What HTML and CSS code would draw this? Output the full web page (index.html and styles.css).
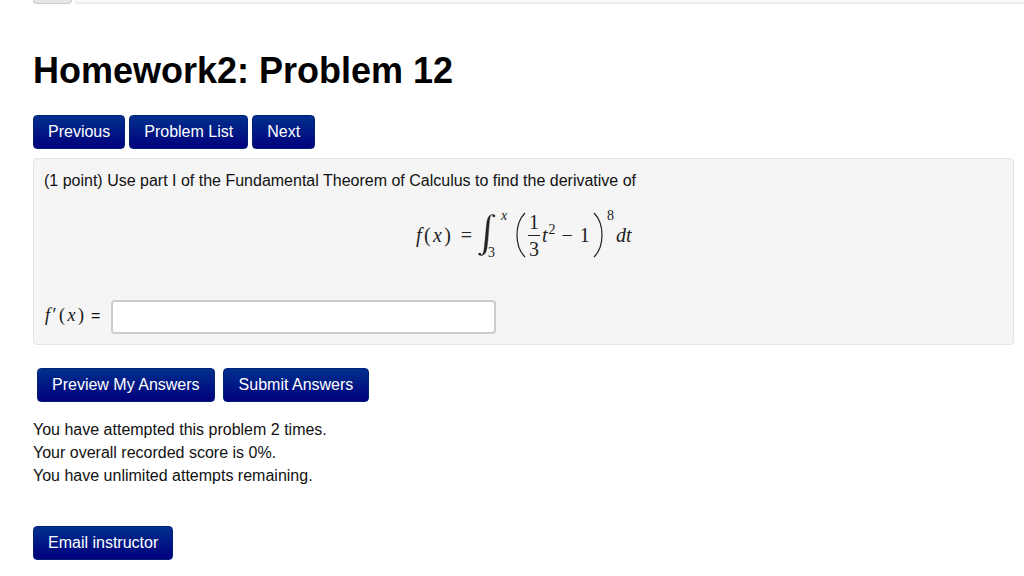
FILE: index.html
```html
<!DOCTYPE html>
<html lang="en">
<head>
<meta charset="utf-8">
<title>Homework2: Problem 12</title>
<link rel="stylesheet" href="styles.css">
</head>
<body>
<div class="topbar"><div class="tab"></div><div class="strip"></div></div>
<h1>Homework2: Problem 12</h1>
<nav class="nav">
  <a class="btn">Previous</a>
  <a class="btn">Problem List</a>
  <a class="btn">Next</a>
</nav>
<section class="well">
  <p class="statement">(1 point) Use part I of the Fundamental Theorem of Calculus to find the derivative of</p>
  <div class="display">
    <span class="m lhs"><i>f</i>(<i>x</i>) =</span>
    <svg class="integral" viewBox="4 0 13 44" preserveAspectRatio="none" aria-hidden="true"><path d="M14.800 1.500c-1.300 0-1.900 1.300-2.200 3.700-.7 5-1 19-2.100 29.500-.4 3.700-1.300 7.800-4.400 7.800-1.100 0-1.800-.6-1.800-1.400 0-.7.5-1 1-1 .6 0 .9.500.9.900 0 .3-.2.500-.3.600.1.100.3.100.4.100 1.200 0 1.700-2 2.100-6 .9-9.500 1.400-22.500 2.200-28.300.6-3.700 2-5.900 3.900-5.900 1.100 0 1.900.6 1.900 1.400 0 .7-.5 1-1 1-.6 0-.9-.5-.9-.9 0-.3.200-.5.300-.600-.1-.1-.3-.1-.4-.1z"/></svg>
    <span class="limits"><span class="upper"><i>x</i></span><span class="lower">3</span></span>
    <svg class="paren" viewBox="0 0 11 46" aria-hidden="true"><path d="M10 1C4.500 6.500 2 14 2 23s2.500 16.500 8 22" fill="none" stroke="currentColor" stroke-width="1.200"/></svg>
    <span class="frac"><span class="num">1</span><span class="den">3</span></span>
    <span class="m tail"><i>t</i><sup>2</sup><span class="minus">&minus;</span>1</span>
    <svg class="paren" viewBox="0 0 11 46" aria-hidden="true"><path d="M1 1c5.500 5.500 8 13 8 22s-2.500 16.500-8 22" fill="none" stroke="currentColor" stroke-width="1.200"/></svg>
    <span class="power">8</span>
    <span class="m dt"><i>dt</i></span>
  </div>
  <div class="answer">
    <label class="label"><span class="m prime"><i>f</i>&prime;(<i>x</i>)</span> =</label>
    <input class="field" type="text" aria-label="answer">
  </div>
</section>
<div class="actions">
  <a class="btn">Preview My Answers</a>
  <a class="btn submit">Submit Answers</a>
</div>
<div class="status">
  <p>You have attempted this problem 2 times.</p>
  <p>Your overall recorded score is 0%.</p>
  <p>You have unlimited attempts remaining.</p>
</div>
<a class="btn email">Email instructor</a>
</body>
</html>
```
FILE: styles.css
```css
* { box-sizing: border-box; }
html, body { height: 576px; overflow: hidden; }
body {
  margin: 0;
  padding: 0 10px 0 33px;
  background: #fff;
  color: #111;
  font-family: "Liberation Sans", Arial, sans-serif;
  font-size: 16px;
  line-height: 23px;
}
.topbar { display: flex; gap: 2px; height: 4px; }
.tab {
  width: 39px;
  background: #e6e6e6;
  border: 1px solid #ccc;
  border-top: 0;
  border-radius: 0 0 4px 4px;
}
.strip {
  flex: 1;
  margin-right: -10px;
  background: #fafafa;
  border-bottom: 2px solid #ececec;
  border-radius: 0 0 0 4px;
}
h1 {
  margin: 45px 0 0;
  color: #000;
  font-size: 36px;
  line-height: 44px;
  font-weight: 700;
}
.btn {
  display: inline-block;
  height: 34px;
  padding: 0 14px;
  border: 1px solid #00217a;
  border-radius: 4px;
  background: linear-gradient(#00308c, #00007d);
  color: #fff;
  line-height: 32px;
  white-space: nowrap;
}
.submit { padding: 0 15px; }
.nav { display: flex; gap: 4px; margin-top: 22px; }
.well {
  height: 187px;
  margin-top: 9px;
  padding: 10px;
  background: #f5f5f5;
  border: 1px solid #e3e3e3;
  border-radius: 4px;
}
.statement { margin: 0; }
.display {
  display: flex;
  align-items: center;
  justify-content: flex-start;
  height: 64px;
  margin-top: 11px;
  padding-left: 372px;
  color: #222;
  font-family: "Liberation Serif", "Times New Roman", serif;
}
.m {
  font-family: "Liberation Serif", "Times New Roman", serif;
  font-size: 20px;
  white-space: nowrap;
}
.m sup { margin-left: 1px; font-size: 14px; line-height: 0; }
.lhs { width: 62px; letter-spacing: 2.400px; }
.integral { flex: none; width: 18px; height: 44px; fill: #222; stroke: #222; stroke-width: 0.3px; }
.limits {
  display: flex;
  flex: none;
  flex-direction: column;
  justify-content: space-between;
  width: 28px;
  height: 52px;
  margin-left: -9px;
  font-size: 14px;
  line-height: 14px;
}
.upper { padding-left: 14px; }
.lower { padding: 0 0 1px 1px; }
.paren { flex: none; width: 11px; height: 46px; color: #222; }
.frac {
  display: flex;
  flex: none;
  flex-direction: column;
  width: 12px;
  margin-left: 2px;
  font-size: 20px;
  line-height: 22px;
}
.num { padding-bottom: 2px; border-bottom: 1px solid #222; text-align: center; }
.den { margin-top: 2px; text-align: center; }
.tail { width: 51px; margin-left: 2px; }
.minus { margin: 0 7px 0 6px; }
.power { align-self: flex-start; margin: 6px 0 0 3px; font-size: 14px; line-height: 14px; }
.dt { margin-left: 2px; font-size: 20px; }
.answer { display: flex; align-items: center; gap: 6px; margin-top: 33px; padding-left: 1px; }
.label { flex: none; width: 60px; margin-bottom: 4px; white-space: nowrap; }
.prime { font-size: 18px; letter-spacing: 2.500px; }
.field {
  width: 385px;
  height: 34px;
  padding: 4px 8px;
  background: #fff;
  border: 2px solid #ccc;
  border-radius: 4px;
  outline: 0;
}
.actions { display: flex; gap: 8px; margin-top: 23px; padding-left: 4px; }
.status { margin-top: 16px; }
.status p { margin: 0; }
.email { margin-top: 39px; }
```
